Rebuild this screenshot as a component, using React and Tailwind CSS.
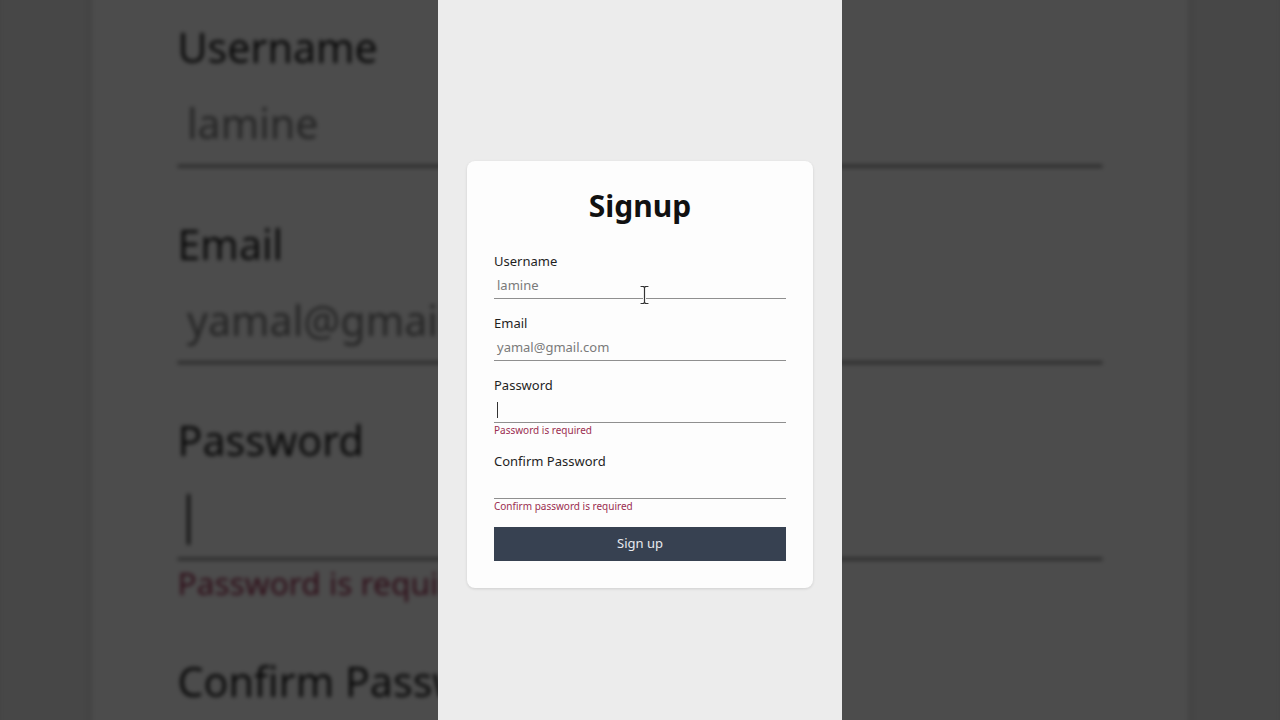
import React from "react";

function IBeam() {
  return (
    <svg
      className="absolute left-[146px] top-[12px]"
      width="9"
      height="20"
      viewBox="0 0 9 20"
    >
      <path
        d="M1 1.5 H3.5 L4.5 2.5 L5.5 1.5 H8 M4.5 2.5 V17.5 M1 18.5 H3.5 L4.5 17.5 L5.5 18.5 H8"
        fill="none"
        stroke="#ffffff"
        strokeWidth="3"
        strokeLinecap="round"
        strokeLinejoin="round"
      />
      <path
        d="M1 1.5 H3.5 L4.5 2.5 L5.5 1.5 H8 M4.5 2.5 V17.5 M1 18.5 H3.5 L4.5 17.5 L5.5 18.5 H8"
        fill="none"
        stroke="#333333"
        strokeWidth="1.2"
        strokeLinecap="round"
        strokeLinejoin="round"
      />
    </svg>
  );
}

function Field({ label, value, caret, error, cursor }) {
  return (
    <div className="flex flex-col">
      <div className="h-[18px] text-[13px] leading-[18px] text-[#1f1f1f]">
        {label}
      </div>
      <div className="relative mt-[3px] flex h-[26px] items-center border-b border-[#8f8f8f] pl-[3px] text-[13px] text-[#7a7a7a]">
        {value}
        {caret && <div className="h-[16px] w-px bg-[#333]" />}
        {cursor && <IBeam />}
      </div>
      {error && (
        <div className="mt-px h-[13px] text-[10px] leading-[13px] text-[#9b2d50]">
          {error}
        </div>
      )}
    </div>
  );
}

function Screen() {
  return (
    <div
      className="flex h-[720px] w-[404px] shrink-0 justify-center bg-[#ececec] pt-[161px]"
      style={{ fontFamily: '"Noto Sans", "Open Sans", sans-serif' }}
    >
      <div className="flex h-[427px] w-[346px] flex-col rounded-lg bg-[#fdfdfd] px-[27px] pt-[27px] shadow-[0_1px_3px_rgba(0,0,0,0.12)]">
        <h1 className="h-[36px] text-center text-[30px] font-bold leading-[36px] text-[#111]">
          Signup
        </h1>
        <div className="mt-[28px] flex flex-col gap-[15px]">
          <Field label="Username" value="lamine" cursor />
          <Field label="Email" value="yamal@gmail.com" />
          <Field label="Password" caret error="Password is required" />
          <Field label="Confirm Password" error="Confirm password is required" />
        </div>
        <button className="mt-[14px] h-[34px] w-full shrink-0 bg-[#374151] text-[13px] text-[#e8eaee]">
          Sign up
        </button>
      </div>
    </div>
  );
}

export default function App() {
  return (
    <div className="relative h-[720px] w-[1280px] overflow-hidden bg-[#444]">
      <div className="absolute inset-0 flex items-center justify-center pt-[2px]">
        <div className="scale-[3.168] blur-[0.7px] brightness-[0.3]">
          <Screen />
        </div>
      </div>
      <div className="relative flex justify-center">
        <Screen />
      </div>
    </div>
  );
}
